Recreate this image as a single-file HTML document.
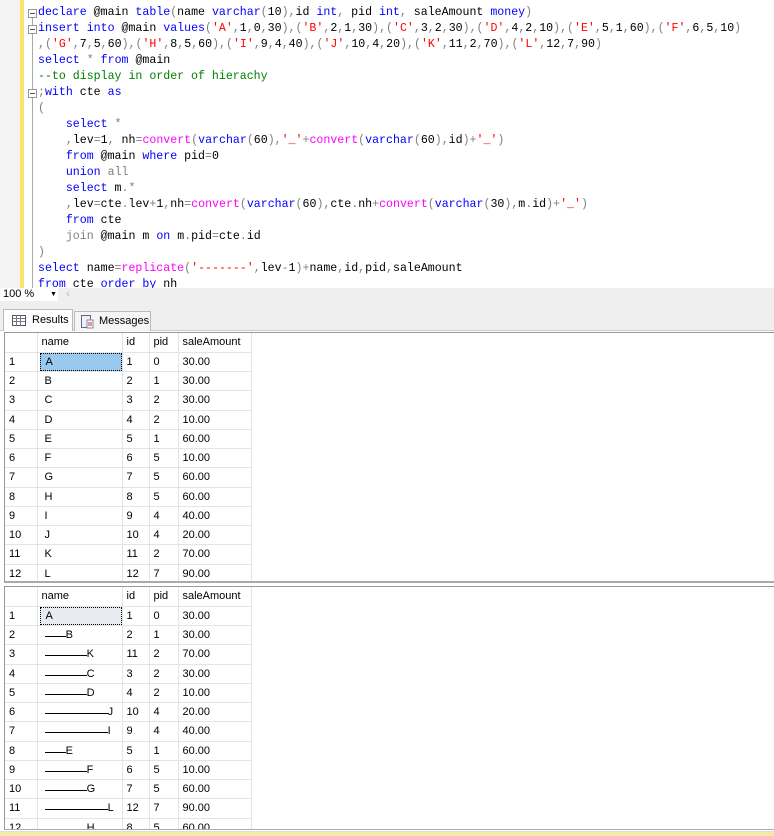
<!DOCTYPE html>
<html><head><meta charset="utf-8"><style>
*{margin:0;padding:0;box-sizing:border-box}
body{width:774px;height:836px;position:relative;overflow:hidden;background:#fff;font-family:"Liberation Sans",sans-serif}
#ed{position:absolute;left:0;top:0;width:774px;height:288px;background:#fff;overflow:hidden}
#gut{position:absolute;left:0;top:0;width:20px;height:288px;background:#f3f3f3}
#ybar{position:absolute;left:20px;top:0;width:4px;height:288px;background:#fbe36b}
.fold{position:absolute;left:28px;width:9px;height:9px;border:1px solid #999;background:#fff}
.fold:after{content:"";position:absolute;left:1px;top:3px;width:5px;height:1px;background:#555}
.vl{position:absolute;left:32px;width:1px;background:#aaa}
pre{position:absolute;left:38px;top:5px;font-family:"Liberation Mono",monospace;font-size:11.6px;line-height:16px;color:#000}
.k{color:#0000ff}.s{color:#ff0000}.g{color:#808080}.f{color:#ff00ff}.c{color:#008000}
#tb{position:absolute;left:0;top:288px;width:774px;height:43px;background:#efefef;border-bottom:1px solid #ccc}
#zoom{position:absolute;left:0;top:0;width:58px;height:13px;background:#fff;font-size:11px;line-height:13px;padding-left:3px}
.tab{position:absolute;font-size:11px;border:1px solid #bbb;border-bottom:none}
.pane{position:absolute;left:4px;width:770px;border-left:1px solid #999;border-top:1px solid #999;background:#fff;overflow:hidden}
table{border-collapse:collapse;font-size:11px;color:#000;position:absolute;left:0;top:0}
td{border-right:1px solid #e4e4e4;border-bottom:1px solid #e4e4e4;height:19.25px;padding:0 0 0 4px;white-space:nowrap;vertical-align:middle}
.d{display:inline-block;height:1px;background:#000;vertical-align:middle;margin-top:3px}
</style></head><body>
<div id="ed">
<div id="gut"></div><div id="ybar"></div>
<div class="vl" style="top:17px;height:272px"></div>
<div class="fold" style="top:9px"></div>
<div class="fold" style="top:25px"></div>
<div class="fold" style="top:89px"></div>
<pre><span class="k">declare</span> @main <span class="k">table</span><span class="g">(</span>name <span class="k">varchar</span><span class="g">(</span>10<span class="g">),</span>id <span class="k">int</span><span class="g">,</span> pid <span class="k">int</span><span class="g">,</span> saleAmount <span class="k">money</span><span class="g">)</span>
<span class="k">insert into</span> @main <span class="k">values</span><span class="g">(</span><span class="s">'A'</span><span class="g">,</span>1<span class="g">,</span>0<span class="g">,</span>30<span class="g">),(</span><span class="s">'B'</span><span class="g">,</span>2<span class="g">,</span>1<span class="g">,</span>30<span class="g">),(</span><span class="s">'C'</span><span class="g">,</span>3<span class="g">,</span>2<span class="g">,</span>30<span class="g">),(</span><span class="s">'D'</span><span class="g">,</span>4<span class="g">,</span>2<span class="g">,</span>10<span class="g">),(</span><span class="s">'E'</span><span class="g">,</span>5<span class="g">,</span>1<span class="g">,</span>60<span class="g">),(</span><span class="s">'F'</span><span class="g">,</span>6<span class="g">,</span>5<span class="g">,</span>10<span class="g">)</span>
<span class="g">,(</span><span class="s">'G'</span><span class="g">,</span>7<span class="g">,</span>5<span class="g">,</span>60<span class="g">),(</span><span class="s">'H'</span><span class="g">,</span>8<span class="g">,</span>5<span class="g">,</span>60<span class="g">),(</span><span class="s">'I'</span><span class="g">,</span>9<span class="g">,</span>4<span class="g">,</span>40<span class="g">),(</span><span class="s">'J'</span><span class="g">,</span>10<span class="g">,</span>4<span class="g">,</span>20<span class="g">),(</span><span class="s">'K'</span><span class="g">,</span>11<span class="g">,</span>2<span class="g">,</span>70<span class="g">),(</span><span class="s">'L'</span><span class="g">,</span>12<span class="g">,</span>7<span class="g">,</span>90<span class="g">)</span>
<span class="k">select</span> <span class="g">*</span> <span class="k">from</span> @main
<span class="c">--to display in order of hierachy</span>
<span class="g">;</span><span class="k">with</span> cte <span class="k">as</span>
<span class="g">(</span>
    <span class="k">select</span> <span class="g">*</span>
    <span class="g">,</span>lev<span class="g">=</span>1<span class="g">,</span> nh<span class="g">=</span><span class="f">convert</span><span class="g">(</span><span class="k">varchar</span><span class="g">(</span>60<span class="g">),</span><span class="s">'_'</span><span class="g">+</span><span class="f">convert</span><span class="g">(</span><span class="k">varchar</span><span class="g">(</span>60<span class="g">),</span>id<span class="g">)+</span><span class="s">'_'</span><span class="g">)</span>
    <span class="k">from</span> @main <span class="k">where</span> pid<span class="g">=</span>0
    <span class="k">union</span> <span class="g">all</span>
    <span class="k">select</span> m<span class="g">.*</span>
    <span class="g">,</span>lev<span class="g">=</span>cte<span class="g">.</span>lev<span class="g">+</span>1<span class="g">,</span>nh<span class="g">=</span><span class="f">convert</span><span class="g">(</span><span class="k">varchar</span><span class="g">(</span>60<span class="g">),</span>cte<span class="g">.</span>nh<span class="g">+</span><span class="f">convert</span><span class="g">(</span><span class="k">varchar</span><span class="g">(</span>30<span class="g">),</span>m<span class="g">.</span>id<span class="g">)+</span><span class="s">'_'</span><span class="g">)</span>
    <span class="k">from</span> cte
    <span class="g">join</span> @main m <span class="k">on</span> m<span class="g">.</span>pid<span class="g">=</span>cte<span class="g">.</span>id
<span class="g">)</span>
<span class="k">select</span> name<span class="g">=</span><span class="f">replicate</span><span class="g">(</span><span class="s">'-------'</span><span class="g">,</span>lev<span class="g">-</span>1<span class="g">)+</span>name<span class="g">,</span>id<span class="g">,</span>pid<span class="g">,</span>saleAmount
<span class="k">from</span> cte <span class="k">order by</span> nh</pre>
</div>
<div id="tb">
<div id="zoom">100 % <span style="position:absolute;left:50px;top:0;font-size:7px">▼</span></div>
<div style="position:absolute;left:66px;top:0;font-size:11px;color:#bbb;line-height:13px">‹</div>
<div class="tab" style="left:3px;top:21px;width:70px;height:22px;background:#fff;line-height:20px;padding-left:28px">Results
<svg style="position:absolute;left:8px;top:5px" width="14" height="11"><rect x=".5" y=".5" width="13" height="10" fill="#fff" stroke="#556"/><path d="M.5 3.5h13M.5 6.5h13M4.5 .5v10M8.5 .5v10" stroke="#778"/></svg></div>
<div class="tab" style="left:74px;top:23px;width:77px;height:20px;background:#f5f5f5;line-height:19px;padding-left:24px">Messages
<svg style="position:absolute;left:5px;top:2px" width="14" height="15"><rect x="1.5" y="1.5" width="9" height="12" fill="#eef" stroke="#667"/><rect x="7" y="6" width="6" height="8" fill="#fff" stroke="#889"/><path d="M8 9h4M8 11h4" stroke="#c33"/></svg></div>
</div>

<div class="pane" style="top:332px;height:251px;border-bottom:2px solid #aaa">
<table>
<tr><td style="width:32px"></td><td style="width:85px">name</td><td style="width:27px">id</td><td style="width:29px">pid</td><td style="width:73px">saleAmount</td></tr>
<tr><td>1</td><td style="padding:0 0 0 2px"><div style="background:#99c9ef;border:1px dotted #000;height:18px;line-height:16px;padding-left:5px">A</div></td><td>1</td><td>0</td><td>30.00</td></tr>
<tr><td>2</td><td>&nbsp;B</td><td>2</td><td>1</td><td>30.00</td></tr>
<tr><td>3</td><td>&nbsp;C</td><td>3</td><td>2</td><td>30.00</td></tr>
<tr><td>4</td><td>&nbsp;D</td><td>4</td><td>2</td><td>10.00</td></tr>
<tr><td>5</td><td>&nbsp;E</td><td>5</td><td>1</td><td>60.00</td></tr>
<tr><td>6</td><td>&nbsp;F</td><td>6</td><td>5</td><td>10.00</td></tr>
<tr><td>7</td><td>&nbsp;G</td><td>7</td><td>5</td><td>60.00</td></tr>
<tr><td>8</td><td>&nbsp;H</td><td>8</td><td>5</td><td>60.00</td></tr>
<tr><td>9</td><td>&nbsp;I</td><td>9</td><td>4</td><td>40.00</td></tr>
<tr><td>10</td><td>&nbsp;J</td><td>10</td><td>4</td><td>20.00</td></tr>
<tr><td>11</td><td>&nbsp;K</td><td>11</td><td>2</td><td>70.00</td></tr>
<tr><td>12</td><td>&nbsp;L</td><td>12</td><td>7</td><td>90.00</td></tr>
</table></div>

<div class="pane" style="top:586px;height:244px;border-bottom:1px solid #aaa">
<table>
<tr><td style="width:32px"></td><td style="width:85px">name</td><td style="width:27px">id</td><td style="width:29px">pid</td><td style="width:73px">saleAmount</td></tr>
<tr><td>1</td><td style="padding:0 0 0 2px"><div style="background:#e8ecf0;border:1px dotted #000;height:18px;line-height:16px;padding-left:5px">A</div></td><td>1</td><td>0</td><td>30.00</td></tr>
<tr><td>2</td><td>&nbsp;<span class="d" style="width:21px"></span>B</td><td>2</td><td>1</td><td>30.00</td></tr>
<tr><td>3</td><td>&nbsp;<span class="d" style="width:42px"></span>K</td><td>11</td><td>2</td><td>70.00</td></tr>
<tr><td>4</td><td>&nbsp;<span class="d" style="width:42px"></span>C</td><td>3</td><td>2</td><td>30.00</td></tr>
<tr><td>5</td><td>&nbsp;<span class="d" style="width:42px"></span>D</td><td>4</td><td>2</td><td>10.00</td></tr>
<tr><td>6</td><td>&nbsp;<span class="d" style="width:63px"></span>J</td><td>10</td><td>4</td><td>20.00</td></tr>
<tr><td>7</td><td>&nbsp;<span class="d" style="width:63px"></span>I</td><td>9</td><td>4</td><td>40.00</td></tr>
<tr><td>8</td><td>&nbsp;<span class="d" style="width:21px"></span>E</td><td>5</td><td>1</td><td>60.00</td></tr>
<tr><td>9</td><td>&nbsp;<span class="d" style="width:42px"></span>F</td><td>6</td><td>5</td><td>10.00</td></tr>
<tr><td>10</td><td>&nbsp;<span class="d" style="width:42px"></span>G</td><td>7</td><td>5</td><td>60.00</td></tr>
<tr><td>11</td><td>&nbsp;<span class="d" style="width:63px"></span>L</td><td>12</td><td>7</td><td>90.00</td></tr>
<tr><td>12</td><td>&nbsp;<span class="d" style="width:42px"></span>H</td><td>8</td><td>5</td><td>60.00</td></tr>
</table></div>
<div style="position:absolute;left:0;top:831px;width:774px;height:5px;background:#f3e9a8;border-top:1px solid #ddd"></div>
</body></html>
